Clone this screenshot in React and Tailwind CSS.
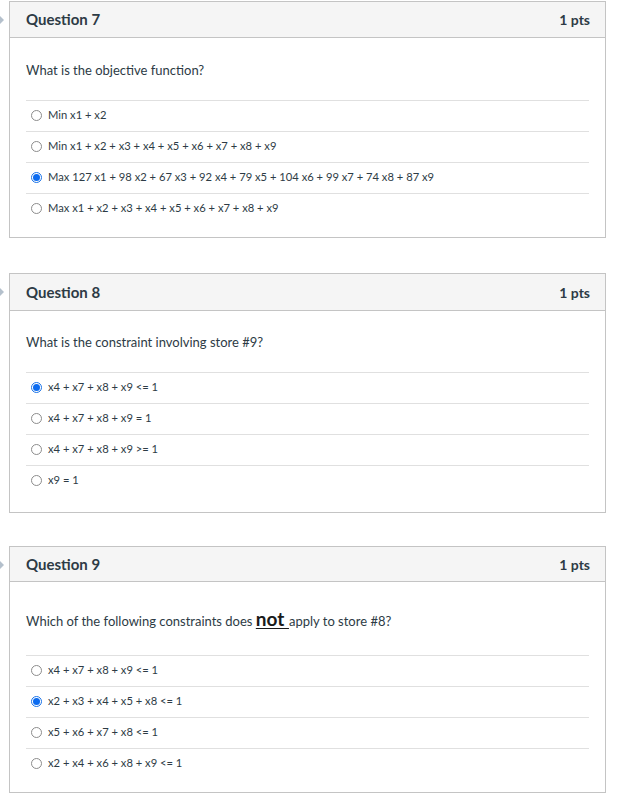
import React from 'react';

const questions = [
  {
    num: 7,
    text: <>What is the objective function?</>,
    answers: [
      'Min x1 + x2',
      'Min x1 + x2 + x3 + x4 + x5 + x6 + x7 + x8 + x9',
      'Max 127 x1 + 98 x2 + 67 x3 + 92 x4 + 79 x5 + 104 x6 + 99 x7 + 74 x8 + 87 x9',
      'Max x1 + x2 + x3 + x4 + x5 + x6 + x7 + x8 + x9',
    ],
    selected: 2,
    head: 'h-[36px]',
    body: 'pt-[22px] pb-[13px]',
    gap: 'mb-[35px]',
  },
  {
    num: 8,
    text: <>What is the constraint involving store #9?</>,
    answers: ['x4 + x7 + x8 + x9 <= 1', 'x4 + x7 + x8 + x9 = 1', 'x4 + x7 + x8 + x9 >= 1', 'x9 = 1'],
    selected: 0,
    head: 'h-[37px]',
    body: 'pt-[21px] pb-[16px]',
    gap: 'mb-[33px]',
  },
  {
    num: 9,
    text: (
      <>
        Which of the following constraints does{' '}
        <span className="text-[19px] font-bold underline underline-offset-2 text-[#1a1a1a]">not </span>apply to store #8?
      </>
    ),
    answers: ['x4 + x7 + x8 + x9 <= 1', 'x2 + x3 + x4 + x5 + x8 <= 1', 'x5 + x6 + x7 + x8 <= 1', 'x2 + x4 + x6 + x8 + x9 <= 1'],
    selected: 1,
    big: true,
    head: 'h-[35px]',
    body: 'pt-[26px] pb-[13px]',
    gap: 'mb-[10px]',
  },
];

const Radio = ({ checked }) =>
  checked ? (
    <span className="w-[11px] h-[11px] rounded-full border border-[#1a73e8] bg-white flex items-center justify-center">
      <span className="w-[7px] h-[7px] rounded-full bg-[#0b6bf0]" />
    </span>
  ) : (
    <span className="w-[11px] h-[11px] rounded-full border border-[#8c8c8c] bg-white" />
  );

const Question = ({ q }) => (
  <div className={`relative ${q.gap}`}>
    {/* little caret sticking out on the left */}
    <span className="absolute left-[-9px] top-[15px] w-0 h-0 border-y-[4px] border-y-transparent border-l-[4px] border-l-[#b4c0cc]" />
    <div className="border border-[#c4c4c4] bg-white">
      <div className={`${q.head} bg-[#f5f5f5] border-b border-[#c4c4c4] flex items-center justify-between pl-4 pr-[15px]`}>
        <span className="text-[15px] font-bold text-[#2d3b45]">Question {q.num}</span>
        <span className="text-[14px] font-bold text-[#2d3b45]">1 pts</span>
      </div>
      <div className={`px-4 ${q.body}`}>
        <p className={`text-[13px] text-[#2d3b45] ${q.big ? 'leading-[22px] mb-[23px]' : 'leading-[20px] mb-[20px]'}`}>{q.text}</p>
        <ul>
          {q.answers.map((a, i) => (
            <li key={i} className="h-[31px] border-t border-[#e0e0e0] flex items-center pl-[5px] pb-[2px] gap-[6px]">
              <Radio checked={i === q.selected} />
              <span className="text-[11.2px] text-[#2d3b45]">{a}</span>
            </li>
          ))}
        </ul>
      </div>
    </div>
  </div>
);

export default function App() {
  return (
    <div className="bg-white min-h-screen pt-px pl-[9px] pr-[18px]" style={{ fontFamily: 'Lato, "Noto Sans", sans-serif' }}>
      {questions.map((q) => (
        <Question key={q.num} q={q} />
      ))}
    </div>
  );
}
